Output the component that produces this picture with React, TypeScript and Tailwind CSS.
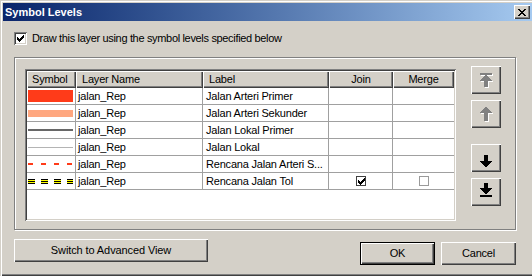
import React from "react";

type Rect = [number, number, number, number];

const head = (y0: number, down: boolean): Rect[] =>
  Array.from({ length: 6 }, (_, i) => {
    const w = down ? 12 - 2 * i : 2 + 2 * i;
    return [6 - w / 2, y0 + i, w, 1] as Rect;
  });

const ARROWS: Record<string, Rect[]> = {
  top: [[0, 0, 12, 2], ...head(2, false), [4, 8, 4, 6]],
  up: [...head(0, false), [4, 6, 4, 8]],
  down: [[4, 0, 4, 6], ...head(6, true)],
  bottom: [[4, 0, 4, 5], ...head(5, true), [0, 12, 12, 2]],
};

const CHECK: Rect[] = [
  [6, 0, 1, 1],
  [5, 1, 2, 1],
  [0, 2, 1, 1],
  [4, 2, 3, 1],
  [0, 3, 2, 1],
  [3, 3, 3, 1],
  [0, 4, 5, 1],
  [1, 5, 3, 1],
  [2, 6, 1, 1],
];

const CLOSE: Rect[] = [
  [0, 0, 2, 1],
  [6, 0, 2, 1],
  [1, 1, 2, 1],
  [5, 1, 2, 1],
  [2, 2, 4, 1],
  [3, 3, 2, 1],
  [2, 4, 4, 1],
  [1, 5, 2, 1],
  [5, 5, 2, 1],
  [0, 6, 2, 1],
  [6, 6, 2, 1],
];

const Pixels = ({ rects, w, h, fill }: { rects: Rect[]; w: number; h: number; fill: string }) => (
  <svg width={w} height={h} shapeRendering="crispEdges" className="block">
    {rects.map(([x, y, rw, rh], i) => (
      <rect key={i} x={x} y={y} width={rw} height={rh} fill={fill} />
    ))}
  </svg>
);

const raised =
  "bg-[#d4d0c8] shadow-[inset_1px_1px_0_#fff,inset_-1px_-1px_0_#404040,inset_-2px_-2px_0_#808080]";

const ArrowButton = ({ kind, disabled, pad }: { kind: string; disabled?: boolean; pad: string }) => (
  <div className={`w-[30px] h-[28px] pl-[9px] ${pad} ${raised}`}>
    {disabled ? (
      <div className="relative w-[13px] h-[16px]">
        <div className="absolute left-[1px] top-[1px]">
          <Pixels rects={ARROWS[kind]} w={12} h={15} fill="#ffffff" />
        </div>
        <div className="absolute left-0 top-0">
          <Pixels rects={ARROWS[kind]} w={12} h={15} fill="#808080" />
        </div>
      </div>
    ) : (
      <Pixels rects={ARROWS[kind]} w={12} h={15} fill="#000000" />
    )}
  </div>
);

const DashLine = ({ color, dash }: { color: string; dash: string }) => (
  <svg width={45} height={2} shapeRendering="crispEdges" className="block">
    <line x1={0} y1={1} x2={45} y2={1} stroke={color} strokeWidth={2} strokeDasharray={dash} />
  </svg>
);

const TollLine = () => (
  <svg width={45} height={5} shapeRendering="crispEdges" className="block">
    {[0, 13, 26, 39].map((x) => (
      <g key={x}>
        <rect x={x} y={0} width={7} height={5} fill="#ffff00" />
        <rect x={x} y={0} width={7} height={1} fill="#000" />
        <rect x={x} y={2} width={7} height={1} fill="#000" />
        <rect x={x} y={4} width={7} height={1} fill="#000" />
      </g>
    ))}
  </svg>
);

const symbolFor = (kind: string) => {
  switch (kind) {
    case "fill":
      return <div className="w-[45px] h-[12px] bg-[#ff3b19]" />;
    case "salmon":
      return <div className="w-[45px] h-[7px] bg-[#ffa77f]" />;
    case "dark":
      return <div className="w-[45px] h-[2px] bg-[#686868]" />;
    case "light":
      return <div className="w-[45px] h-[1px] bg-[#b4b4b4]" />;
    case "dash":
      return <DashLine color="#ff3b19" dash="5 8" />;
    default:
      return <TollLine />;
  }
};

const rows = [
  { sym: "fill", label: "Jalan Arteri Primer" },
  { sym: "salmon", label: "Jalan Arteri Sekunder" },
  { sym: "dark", label: "Jalan Lokal Primer" },
  { sym: "light", label: "Jalan Lokal" },
  { sym: "dash", label: "Rencana Jalan Arteri S..." },
  { sym: "toll", label: "Rencana Jalan Tol", boxes: true },
];

const headerCell =
  "h-full flex items-center bg-[#d4d0c8] shadow-[inset_1px_1px_0_#fff,inset_-1px_-1px_0_#404040,inset_-2px_-2px_0_#808080]";

const SmallBox = ({ checked }: { checked?: boolean }) => (
  <div
    className={`w-[10px] h-[10px] bg-white border ${checked ? "border-[#404040]" : "border-[#9a9a9a]"}`}
  >
    {checked && (
      <div className="ml-[1px] mt-[1px]">
        <Pixels rects={CHECK} w={7} h={7} fill="#000" />
      </div>
    )}
  </div>
);

const SymbolTable = () => (
  <div className="w-[431px] h-[152px] mt-[3px] p-[2px] bg-white shadow-[inset_1px_1px_0_#808080,inset_-1px_-1px_0_#fff,inset_2px_2px_0_#404040,inset_-2px_-2px_0_#d4d0c8]">
    <div className="flex h-[17px]">
      <div className={`${headerCell} w-[49px] pl-[5px]`}>Symbol</div>
      <div className={`${headerCell} w-[127px] pl-[6px]`}>Layer Name</div>
      <div className={`${headerCell} w-[126px] pl-[6px]`}>Label</div>
      <div className={`${headerCell} w-[64px] justify-center`}>Join</div>
      <div className={`${headerCell} w-[61px] justify-center`}>Merge</div>
    </div>
    {rows.map((row, index) => (
      <div key={index} className="flex h-[17px] border-b border-[#a0a0a0]">
        <div className="w-[49px] h-full flex items-center pl-[1px] border-r border-[#a0a0a0]">
          {symbolFor(row.sym)}
        </div>
        <div className="w-[127px] h-full flex items-center pl-[2px] border-r border-[#a0a0a0]">jalan_Rep</div>
        <div className="w-[126px] h-full flex items-center pl-[3px] border-r border-[#a0a0a0] whitespace-nowrap overflow-hidden">
          {row.label}
        </div>
        <div className="w-[64px] h-full flex items-center justify-center border-r border-[#a0a0a0]">
          {row.boxes && <SmallBox checked />}
        </div>
        <div className="w-[61px] h-full flex items-center justify-center">
          {row.boxes && <SmallBox />}
        </div>
      </div>
    ))}
  </div>
);

export default function App() {
  return (
    <div className="w-[532px] h-[276px] overflow-hidden bg-[#d4d0c8] pl-[3px] pt-[3px] flex flex-col font-['Liberation_Sans',Arial,sans-serif] text-[11px] tracking-[-0.2px] text-black shadow-[inset_1px_1px_0_#d4d0c8,inset_2px_2px_0_#fff,inset_0_-1px_0_#404040,inset_0_-2px_0_#808080]">
      <div className="h-[18px] shrink-0 flex items-center bg-linear-to-r from-[#0a246a] to-[#a6caf0] pl-[2px] pr-[2px]">
        <span className="text-white font-bold tracking-normal">Symbol Levels</span>
        <div className={`ml-auto w-[16px] h-[14px] flex items-center justify-center ${raised}`}>
          <Pixels rects={CLOSE} w={8} h={7} fill="#000" />
        </div>
      </div>

      <div className="mt-[11px] ml-[11px] h-[13px] flex items-center gap-[5px]">
        <div className="w-[13px] h-[13px] pl-[3px] pt-[3px] bg-white shadow-[inset_1px_1px_0_#808080,inset_-1px_-1px_0_#fff,inset_2px_2px_0_#404040,inset_-2px_-2px_0_#d4d0c8]">
          <Pixels rects={CHECK} w={7} h={7} fill="#000" />
        </div>
        <span className="tracking-[-0.33px]">Draw this layer using the symbol levels specified below</span>
      </div>

      <div className="mt-[12px] ml-[11px] w-[502px] h-[173px] shrink-0 flex items-start pl-[10px] pt-[8px] border border-[#808080] shadow-[inset_1px_1px_0_#fff,1px_1px_0_#fff]">
        <SymbolTable />
        <div className="ml-[15px] flex flex-col">
          <ArrowButton kind="top" disabled pad="pt-[7px]" />
          <div className="mt-[6px]">
            <ArrowButton kind="up" disabled pad="pt-[7px]" />
          </div>
          <div className="mt-[16px]">
            <ArrowButton kind="down" pad="pt-[11px]" />
          </div>
          <div className="mt-[6px]">
            <ArrowButton kind="bottom" pad="pt-[5px]" />
          </div>
        </div>
      </div>

      <div className="mt-[9px] ml-[11px] flex items-start">
        <div className={`w-[194px] h-[23px] flex items-center justify-center tracking-[-0.1px] ${raised}`}>
          Switch to Advanced View
        </div>
        <div className="ml-[152px] mt-[3px] w-[75px] h-[23px] border border-black">
          <div className={`w-full h-full flex items-center justify-center ${raised}`}>OK</div>
        </div>
        <div className={`ml-[6px] mt-[3px] w-[75px] h-[23px] flex items-center justify-center ${raised}`}>Cancel</div>
      </div>
    </div>
  );
}
